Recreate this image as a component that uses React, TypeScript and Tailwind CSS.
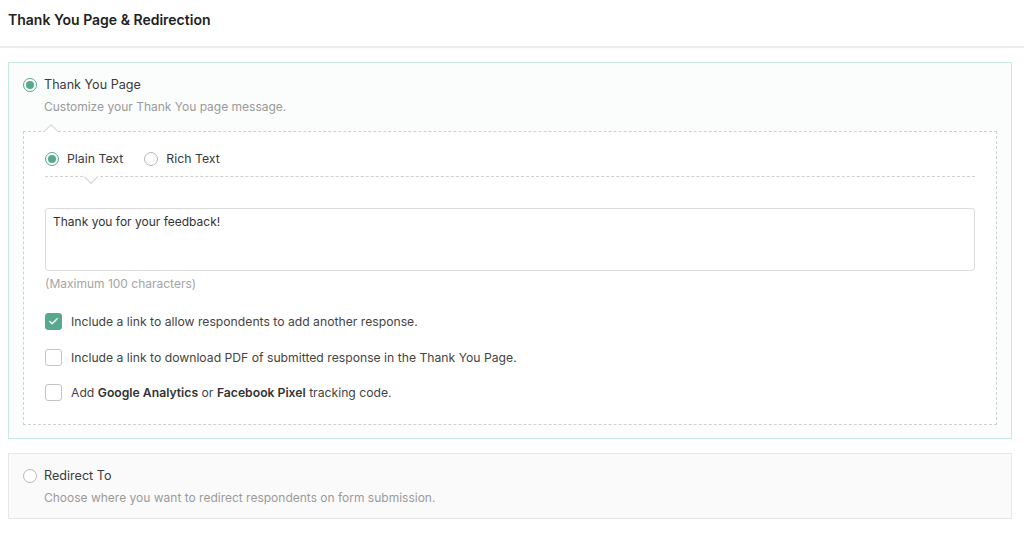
import { Check } from 'lucide-react';

const Radio = ({ checked = false }: { checked?: boolean }) => (
  <span
    className={`flex h-[14px] w-[14px] shrink-0 items-center justify-center rounded-full border bg-white ${
      checked ? 'border-[#56a98c]' : 'border-[#b9b9b9]'
    }`}
  >
    {checked && <span className="h-[8px] w-[8px] rounded-full bg-[#56a98c]" />}
  </span>
);

const Checkbox = ({ checked = false }: { checked?: boolean }) => (
  <span
    className={`flex h-[17px] w-[17px] shrink-0 items-center justify-center rounded-[3px] border ${
      checked ? 'border-[#56a98c] bg-[#56a98c]' : 'border-[#c4c4c4] bg-white'
    }`}
  >
    {checked && <Check className="h-[11px] w-[11px] text-white" strokeWidth={3} />}
  </span>
);

const options = [
  { checked: true, label: <>Include a link to allow respondents to add another response.</> },
  { checked: false, label: <>Include a link to download PDF of submitted response in the Thank You Page.</> },
  {
    checked: false,
    label: (
      <>
        Add <span className="font-semibold text-[#333]">Google Analytics</span> or{' '}
        <span className="font-semibold text-[#333]">Facebook Pixel</span> tracking code.
      </>
    ),
  },
];

export default function App() {
  return (
    <div className="min-h-screen w-full bg-white font-['Inter',sans-serif] text-[#333]">
      {/* Header */}
      <div className="h-[48px] border-b-2 border-[#ececec] pl-2 pt-[11px]">
        <h1 className="text-[14px] leading-[18px] font-semibold text-[#222]">Thank You Page &amp; Redirection</h1>
      </div>

      <div className="ml-2 mr-3 mt-[14px] flex flex-col gap-[14px]">
        {/* Thank You Page card */}
        <div className="border border-[#c7eadd] bg-[#fbfdfc] px-[14px] pt-[13px] pb-[13px]">
          <div className="flex h-[18px] items-center gap-[7px]">
            <Radio checked />
            <span className="text-[12.6px] leading-[18px] text-[#3a3a3a]">Thank You Page</span>
          </div>
          <p className="mt-[5px] pl-[21px] text-[12px] leading-[16px] text-[#9a9a9a]">
            Customize your Thank You page message.
          </p>

          <div className="relative mt-[16px] border border-dashed border-[#d0d0d0] bg-white px-[21px] pt-[18px] pb-[23px]">
            <span className="absolute -top-[6px] left-[22px] h-[10px] w-[10px] rotate-45 border-l border-t border-[#d6d6d6] bg-white" />

            <div className="flex h-[18px] items-center gap-[8px]">
              <Radio checked />
              <span className="text-[12.3px] leading-[18px] text-[#3a3a3a]">Plain Text</span>
              <span className="ml-[13px]">
                <Radio />
              </span>
              <span className="text-[12.3px] leading-[18px] text-[#3a3a3a]">Rich Text</span>
            </div>

            <div className="relative mt-[8px] border-b border-dashed border-[#d0d0d0]">
              <span className="absolute -bottom-[6px] left-[41px] h-[10px] w-[10px] rotate-45 border-b border-r border-[#d0d0d0] bg-white" />
            </div>

            <div className="mt-[31px] h-[63px] rounded-[3px] border border-[#dcdcdc] bg-white px-[7px] pt-[5px] text-[12px] leading-[16px] text-[#333]">
              Thank you for your feedback!
            </div>
            <p className="mt-[5px] text-[12px] leading-[16px] text-[#a5a5a5]">(Maximum 100 characters)</p>

            <div className="mt-[21px] flex flex-col gap-[18.5px]">
              {options.map((o, i) => (
                <div key={i} className="flex h-[17px] items-center gap-[9px]">
                  <Checkbox checked={o.checked} />
                  <span className="text-[12.2px] leading-[17px] text-[#444]">{o.label}</span>
                </div>
              ))}
            </div>
          </div>
        </div>

        {/* Redirect card */}
        <div className="border border-[#e7e7e7] bg-[#fafafa] px-[14px] pt-[13px] pb-[12px]">
          <div className="flex h-[18px] items-center gap-[7px]">
            <Radio />
            <span className="text-[12.6px] leading-[18px] text-[#3a3a3a]">Redirect To</span>
          </div>
          <p className="mt-[5px] pl-[21px] text-[12px] leading-[16px] text-[#9a9a9a]">
            Choose where you want to redirect respondents on form submission.
          </p>
        </div>
      </div>
    </div>
  );
}
